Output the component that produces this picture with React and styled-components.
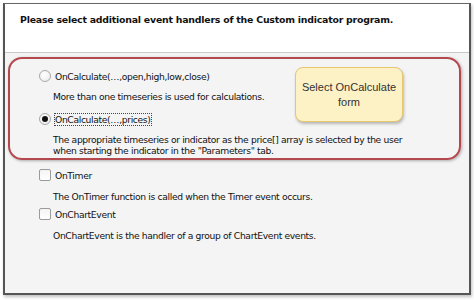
import React from "react";
import styled, { createGlobalStyle } from "styled-components";

const Global = createGlobalStyle`
  html, body { margin: 0; padding: 0; background: #ffffff; }
  body { width: 474px; height: 300px; overflow: hidden; }
`;

const Frame = styled.div`
  position: relative;
  box-sizing: border-box;
  margin: 3px 0 0 3px;
  width: 468px;
  height: 292px;
  border-top: 1px solid #666;
  border-left: 2px solid #555;
  border-right: 2px solid #555;
  border-bottom: 2px solid #555;
  background: #f4f4f4;
  box-shadow: 1px 2px 3px rgba(0, 0, 0, 0.25);
  display: flex;
  flex-direction: column;
  font-family: "DejaVu Sans", Verdana, sans-serif;
  color: #111;
`;

const Header = styled.div`
  height: 49px;
  background: #ffffff;
  border-bottom: 1px solid #c8c8c8;
  padding: 10px 0 0 15px;
  box-sizing: border-box;
  font-weight: bold;
  font-size: 9.4px;
  letter-spacing: -0.22px;
`;

const Body = styled.div`
  display: flex;
  flex-direction: column;
  padding: 4px 8px 0 3px;
`;

const Highlight = styled.div`
  border: 2px solid #b3484d;
  border-radius: 14px;
  box-shadow: 1px 1px 3px rgba(0, 0, 0, 0.3);
  padding: 10px 0 2px 29px;
  display: flex;
  flex-direction: column;
`;

const Plain = styled.div`
  padding: 8px 0 0 31px;
  display: flex;
  flex-direction: column;
`;

const Option = styled.div`
  display: flex;
  align-items: center;
  gap: 3px;
  height: 14px;
  font-size: 9.2px;
  letter-spacing: -0.35px;
`;

const Radio = styled.span`
  box-sizing: border-box;
  width: 12px;
  height: 12px;
  border-radius: 50%;
  border: 1px solid #a8a8a8;
  background: radial-gradient(circle at 40% 35%, #ffffff 0%, #f0f0f0 70%, #e2e2e2 100%);
  display: flex;
  align-items: center;
  justify-content: center;
  &::after {
    content: "";
    width: 6px;
    height: 6px;
    border-radius: 50%;
    background: ${(p) => (p.$checked ? "#111" : "transparent")};
  }
`;

const Check = styled.span`
  box-sizing: border-box;
  width: 12px;
  height: 12px;
  border-radius: 2px;
  border: 1px solid #9a9a9a;
  background: linear-gradient(#f4f4f4, #ffffff);
`;

const Label = styled.span`
  padding: 0 1px;
  outline: ${(p) => (p.$focus ? "1px dotted #444" : "none")};
  outline-offset: -1px;
  line-height: 13px;
`;

const Desc = styled.div`
  font-size: 9.2px;
  letter-spacing: -0.35px;
  line-height: 11px;
  padding-left: 14px;
  margin: ${(p) => p.$before}px 0 ${(p) => p.$after}px;
`;

const Callout = styled.div`
  position: absolute;
  left: 290px;
  top: 63px;
  width: 108px;
  height: 55px;
  box-sizing: border-box;
  border: 1px solid #e6c66f;
  border-radius: 8px;
  background: #fdf1c6;
  box-shadow: 1px 2px 3px rgba(0, 0, 0, 0.25);
  display: flex;
  align-items: center;
  justify-content: center;
  text-align: center;
  font-family: "Liberation Sans", Arial, sans-serif;
  font-size: 11px;
  line-height: 15px;
  color: #333;
`;

export default function App() {
  return (
    <>
      <Global />
      <Frame>
        <Header>Please select additional event handlers of the Custom indicator program.</Header>
        <Body>
          <Highlight>
            <Option>
              <Radio />
              <Label>OnCalculate(…,open,high,low,close)</Label>
            </Option>
            <Desc $before={8} $after={10}>More than one timeseries is used for calculations.</Desc>
            <Option>
              <Radio $checked />
              <Label $focus>OnCalculate(…,prices)</Label>
            </Option>
            <Desc $before={8} $after={0}>
              The appropriate timeseries or indicator as the price[] array is selected by the user
              <br />
              when starting the indicator in the "Parameters" tab.
            </Desc>
          </Highlight>
          <Plain>
            <Option>
              <Check />
              <Label>OnTimer</Label>
            </Option>
            <Desc $before={9} $after={5}>The OnTimer function is called when the Timer event occurs.</Desc>
            <Option>
              <Check />
              <Label>OnChartEvent</Label>
            </Option>
            <Desc $before={9} $after={0}>OnChartEvent is the handler of a group of ChartEvent events.</Desc>
          </Plain>
        </Body>
        <Callout>
          Select OnCalculate
          <br />
          form
        </Callout>
      </Frame>
    </>
  );
}
